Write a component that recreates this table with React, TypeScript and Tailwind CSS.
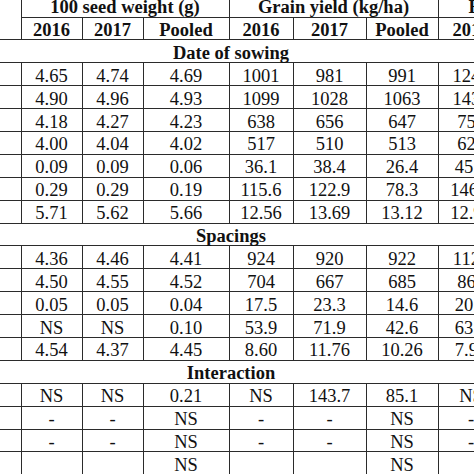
import React from "react";

const C = "border-[#2b2b2b] border-solid";
const dataCell = `border-[1.5px] ${C} text-center align-middle p-0 pt-[3px] leading-[18px] whitespace-nowrap`;
const firstCell = `border-y-[1.5px] border-r-[1.5px] border-l-0 ${C} p-0`;

type Row = string[];

const sowing: Row[] = [
  ["4.65", "4.74", "4.69", "1001", "981", "991", "1248"],
  ["4.90", "4.96", "4.93", "1099", "1028", "1063", "1432"],
  ["4.18", "4.27", "4.23", "638", "656", "647", "753"],
  ["4.00", "4.04", "4.02", "517", "510", "513", "627"],
  ["0.09", "0.09", "0.06", "36.1", "38.4", "26.4", "45.3"],
  ["0.29", "0.29", "0.19", "115.6", "122.9", "78.3", "146.2"],
  ["5.71", "5.62", "5.66", "12.56", "13.69", "13.12", "12.94"],
];

const spacings: Row[] = [
  ["4.36", "4.46", "4.41", "924", "920", "922", "1124"],
  ["4.50", "4.55", "4.52", "704", "667", "685", "866"],
  ["0.05", "0.05", "0.04", "17.5", "23.3", "14.6", "20.3"],
  ["NS", "NS", "0.10", "53.9", "71.9", "42.6", "63.7"],
  ["4.54", "4.37", "4.45", "8.60", "11.76", "10.26", "7.96"],
];

const interaction: Row[] = [
  ["NS", "NS", "0.21", "NS", "143.7", "85.1", "NS"],
  ["-", "-", "NS", "-", "-", "NS", "-"],
  ["-", "-", "NS", "-", "-", "NS", "-"],
  ["", "", "NS", "", "", "NS", ""],
];

function DataRows({ rows }: { rows: Row[] }) {
  return (
    <>
      {rows.map((r, i) => (
        <tr key={i} className="h-[22.9px]">
          <td className={firstCell}></td>
          {r.map((v, j) => (
            <td key={j} className={dataCell}>
              {v}
            </td>
          ))}
        </tr>
      ))}
    </>
  );
}

function Section({ title }: { title: string }) {
  return (
    <tr className="h-[22.9px]">
      <td colSpan={8} className={`border-y-[1.5px] border-x-0 ${C} p-0 pt-[3px] leading-[18px]`}>
        <div className="w-[462px] text-center font-bold">{title}</div>
      </td>
    </tr>
  );
}

export default function App() {
  return (
    <div className="w-[474px] h-[474px] overflow-hidden bg-white text-[#111] font-['Liberation_Serif',serif] text-[18.5px] leading-[20px]">
      <table className="table-fixed border-collapse w-[504px]">
        <colgroup>
          <col className="w-[21px]" />
          <col className="w-[61px]" />
          <col className="w-[61px]" />
          <col className="w-[86px]" />
          <col className="w-[64px]" />
          <col className="w-[73px]" />
          <col className="w-[72px]" />
          <col className="w-[66px]" />
        </colgroup>
        <tbody>
          <tr className="h-[17px]">
            <td rowSpan={2} className={`border-b-[1.5px] border-r-[1.5px] border-t-0 border-l-0 ${C} p-0`}></td>
            <td colSpan={3} className={`border-x-[1.5px] border-b-[1.5px] border-t-0 ${C} p-0 text-center font-bold leading-[15px] align-top whitespace-nowrap`}>
              100 seed weight (g)
            </td>
            <td colSpan={3} className={`border-x-[1.5px] border-b-[1.5px] border-t-0 ${C} p-0 text-center font-bold leading-[15px] align-top whitespace-nowrap`}>
              Grain yield (kg/ha)
            </td>
            <td className={`border-x-[1.5px] border-b-[1.5px] border-t-0 ${C} p-0 pl-[30px] text-left font-bold leading-[15px] align-top whitespace-nowrap`}>
              Biological yield (kg/ha)
            </td>
          </tr>
          <tr className="h-[22.9px] font-bold">
            <td className={dataCell}>2016</td>
            <td className={dataCell}>2017</td>
            <td className={dataCell}>Pooled</td>
            <td className={dataCell}>2016</td>
            <td className={dataCell}>2017</td>
            <td className={dataCell}>Pooled</td>
            <td className={dataCell}>2016</td>
          </tr>
          <Section title="Date of sowing" />
          <DataRows rows={sowing} />
          <Section title="Spacings" />
          <DataRows rows={spacings} />
          <Section title="Interaction" />
          <DataRows rows={interaction} />
        </tbody>
      </table>
    </div>
  );
}
